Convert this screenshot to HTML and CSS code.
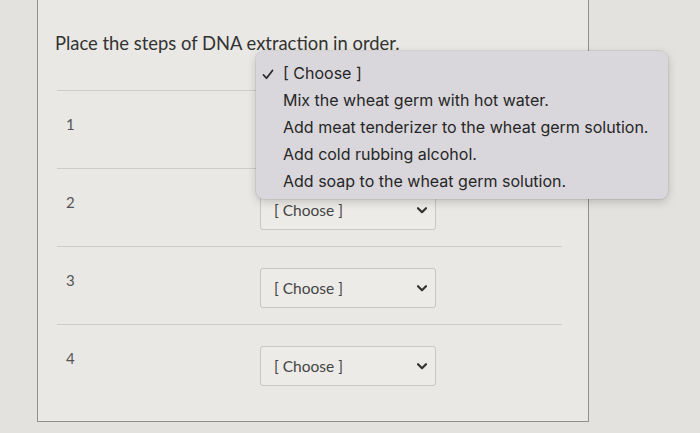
FILE: index.html
```html
<!DOCTYPE html>
<html lang="en">
<head>
    <meta charset="UTF-8">
    <meta name="viewport" content="width=device-width, initial-scale=1.0">
    <title>Quiz question</title>
    <link rel="stylesheet" href="styles.css">
</head>
<body>
    <div class="page">
        <div class="question">
            <h1 class="question-text">Place the steps of DNA extraction in order.</h1>
            <div class="answers">
                <div class="answer-row">
                    <span class="answer-num">1</span>
                    <div class="choose"><span>[ Choose ]</span><svg class="chevron" viewBox="0 0 10 7" width="10" height="7"><path d="M1 1.2 L5 5.2 L9 1.2" /></svg></div>
                </div>
                <div class="answer-row">
                    <span class="answer-num">2</span>
                    <div class="choose"><span>[ Choose ]</span><svg class="chevron" viewBox="0 0 10 7" width="10" height="7"><path d="M1 1.2 L5 5.2 L9 1.2" /></svg></div>
                </div>
                <div class="answer-row">
                    <span class="answer-num">3</span>
                    <div class="choose"><span>[ Choose ]</span><svg class="chevron" viewBox="0 0 10 7" width="10" height="7"><path d="M1 1.2 L5 5.2 L9 1.2" /></svg></div>
                </div>
                <div class="answer-row">
                    <span class="answer-num">4</span>
                    <div class="choose"><span>[ Choose ]</span><svg class="chevron" viewBox="0 0 10 7" width="10" height="7"><path d="M1 1.2 L5 5.2 L9 1.2" /></svg></div>
                </div>
            </div>
        </div>

        <ul class="menu">
            <li class="menu-item selected"><svg class="check" viewBox="0 0 12 11" width="12" height="11"><path d="M1.5 6 L4.5 9.2 L10.5 1.5" /></svg>[ Choose ]</li>
            <li class="menu-item">Mix the wheat germ with hot water.</li>
            <li class="menu-item">Add meat tenderizer to the wheat germ solution.</li>
            <li class="menu-item">Add cold rubbing alcohol.</li>
            <li class="menu-item">Add soap to the wheat germ solution.</li>
        </ul>
    </div>
</body>
</html>
```

FILE: styles.css
```css
body {
    margin: 0;
    padding: 0;
    background-color: #e3e2de;
    font-family: Lato, "Open Sans", sans-serif;
    color: #3b3b3b;
}

.page {
    position: relative;
    width: 700px;
    height: 433px;
    overflow: hidden;
}

.question {
    margin-left: 37px;
    width: 552px;
    height: 422px;
    box-sizing: border-box;
    background-color: #e9e8e4;
    border: 1px solid #8f8f8c;
    border-top: none;
    padding: 32px 0 0 19px;
}

.question-text {
    font-size: 18.4px;
    font-weight: 400;
    line-height: 22px;
    margin: 0 0 36px -2px;
    color: #333;
}

.answers {
    width: 505px;
}

.answer-row {
    display: flex;
    align-items: flex-start;
    border-top: 1px solid #cdccc8;
    padding: 21px 0 16px;
}

.answer-num {
    width: 194px;
    padding-left: 9px;
    padding-top: 3px;
    font-size: 15px;
    color: #555;
}

.choose {
    width: 176px;
    height: 40px;
    box-sizing: border-box;
    display: flex;
    align-items: center;
    justify-content: space-between;
    padding: 0 8px 0 13px;
    border: 1px solid #c8c7c3;
    border-radius: 3px;
    background-color: #ecebe7;
    font-size: 15.5px;
    color: #444;
}

.chevron path {
    fill: none;
    stroke: #333;
    stroke-width: 2.2;
    stroke-linecap: round;
    stroke-linejoin: round;
}

.menu {
    position: absolute;
    left: 256px;
    top: 51px;
    width: 412px;
    height: 148px;
    box-sizing: border-box;
    margin: 0;
    padding: 9px 0 0 27px;
    list-style: none;
    background-color: #d9d7dc;
    border-radius: 8px;
    box-shadow: 0 3px 10px rgba(0, 0, 0, 0.18), 0 0 0 1px rgba(0, 0, 0, 0.06);
    font-family: Inter, "Open Sans", sans-serif;
    font-size: 16px;
    color: #262626;
}

.menu-item {
    position: relative;
    line-height: 27px;
}

.check {
    position: absolute;
    left: -21px;
    top: 9px;
}

.check path {
    fill: none;
    stroke: #2a2a2a;
    stroke-width: 1.8;
    stroke-linecap: round;
    stroke-linejoin: round;
}
```
